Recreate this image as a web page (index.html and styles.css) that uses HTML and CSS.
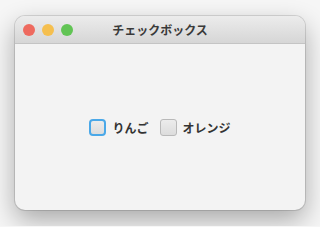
FILE: index.html
```html
<!DOCTYPE html>
<html lang="ja">

<head>
    <meta charset="UTF-8">
    <title>チェックボックス</title>
    <link rel="stylesheet" href="styles.css">
</head>

<body>
    <div class="window">
        <div class="title-bar">
            <div class="lights">
                <span class="light close"></span>
                <span class="light minimize"></span>
                <span class="light zoom"></span>
            </div>
            <div class="title">チェックボックス</div>
            <div></div>
        </div>

        <div class="content">
            <label class="check">
                <span class="box focused"></span>
                <span class="check-label">りんご</span>
            </label>
            <label class="check">
                <span class="box"></span>
                <span class="check-label">オレンジ</span>
            </label>
        </div>
    </div>
</body>

</html>
```

FILE: styles.css
```css
body {
    margin: 0;
    padding: 16px 15px;
    background-color: #f6f6f6;
    font-family: "Noto Sans CJK JP", "Noto Sans", sans-serif;
    color: #333;
}

.window {
    width: 290px;
    height: 194px;
    background-color: #f3f3f3;
    border-radius: 10px;
    overflow: hidden;
    box-shadow: 0 0 0 1px rgba(0, 0, 0, 0.12), 0 10px 26px rgba(0, 0, 0, 0.32);
    display: flex;
    flex-direction: column;
}

.title-bar {
    height: 27px;
    display: grid;
    grid-template-columns: 1fr auto 1fr;
    align-items: center;
    background: linear-gradient(#ececec, #d6d6d6);
    border-bottom: 1px solid #c4c4c4;
}

.lights {
    display: flex;
    gap: 7px;
    padding-left: 8px;
}

.light {
    width: 12px;
    height: 12px;
    border-radius: 50%;
}

.close {
    background-color: #ee6a5f;
}

.minimize {
    background-color: #f5bf4f;
}

.zoom {
    background-color: #61c454;
}

.title {
    font-size: 12px;
    font-weight: bold;
    color: #3a3a3a;
}

.content {
    flex: 1;
    display: flex;
    justify-content: center;
    align-items: center;
    gap: 11px;
}

.check {
    display: flex;
    align-items: center;
    gap: 6px;
}

.box {
    width: 15px;
    height: 15px;
    border: 1px solid #b9b9b9;
    border-radius: 3px;
    background: linear-gradient(#ececec, #dcdcdc);
}

.box.focused {
    width: 13px;
    height: 13px;
    border: 2px solid #4aa8e8;
    border-radius: 4px;
}

.check-label {
    font-size: 12px;
    font-weight: bold;
    color: #333;
}
```
